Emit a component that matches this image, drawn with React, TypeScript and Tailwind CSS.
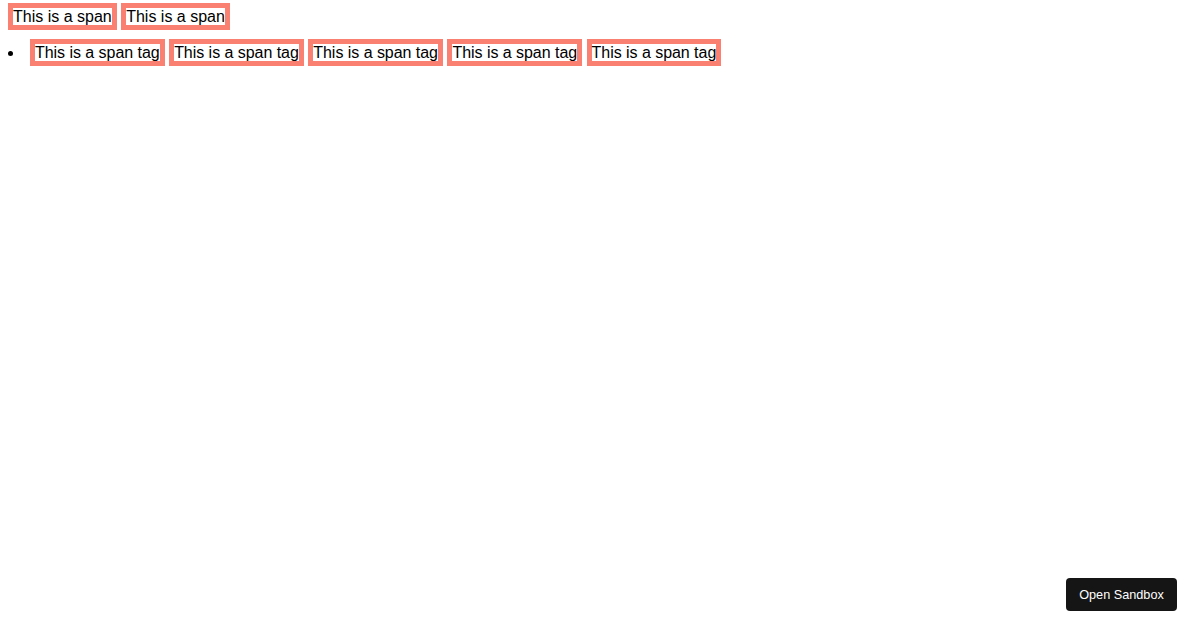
export default function App() {
  const tags = Array.from({ length: 5 }, (_, i) => i);

  return (
    <div className="min-h-[630px] bg-white p-2 text-base leading-[normal] text-black font-['Liberation_Sans',Arial,sans-serif]">
      <div>
        <span className="border-[5px] border-[#fa8072]">This is a span</span>{" "}
        <span className="border-[5px] border-[#fa8072]">This is a span</span>
      </div>
      <ul className="mt-[18px] list-inside list-disc">
        <li>
          {tags.map((i) => (
            <span key={i}>
              {" "}
              <span className="border-[5px] border-[#fa8072] tracking-[-0.04px]">This is a span tag</span>
            </span>
          ))}
        </li>
      </ul>

      <button className="fixed bottom-[19px] right-[23px] h-[33px] w-[111px] rounded-[4px] bg-[#151515] text-[12.7px] text-white font-['Liberation_Sans',Arial,sans-serif]">
        Open Sandbox
      </button>
    </div>
  );
}
